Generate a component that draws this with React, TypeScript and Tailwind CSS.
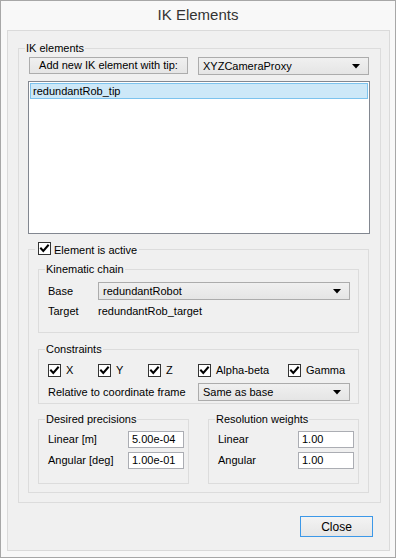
import React from "react";

const font = { fontFamily: '"Liberation Sans", Arial, sans-serif' };

const Check = () => (
  <span className="inline-flex w-[13px] h-[13px] shrink-0 border border-[#333333] bg-white items-center justify-center">
    <svg width="11" height="11" viewBox="0 0 11 11">
      <path d="M2 5.5 L4.3 8 L9 2.5" fill="none" stroke="#000" strokeWidth="2" strokeLinecap="square" />
    </svg>
  </span>
);

const Arrow = () => (
  <svg width="8" height="5" viewBox="0 0 8 5" className="shrink-0">
    <path d="M0 0 H8 L4 4.5 Z" fill="#000" />
  </svg>
);

const Combo = ({ value, className }: { value: string; className: string }) => (
  <div
    className={`flex items-center justify-between h-[18px] border border-[#acacac] bg-gradient-to-b from-[#f0f0f0] to-[#e5e5e5] pl-[4px] pr-[8px] ${className}`}
  >
    <span className="leading-none">{value}</span>
    <Arrow />
  </div>
);

const Field = ({ value }: { value: string }) => (
  <div className="w-[56px] h-[17px] border border-[#abadb3] bg-white pl-[3px] flex items-center leading-none">
    {value}
  </div>
);

const Group = ({
  label,
  className,
  children,
}: {
  label: React.ReactNode;
  className: string;
  children?: React.ReactNode;
}) => (
  <div className={`relative border border-[#dcdcdc] ${className}`}>
    <div className="absolute left-[6px] top-[-8px] bg-[#f0f0f0] px-[1px] leading-[14px] flex items-center">
      {label}
    </div>
    {children}
  </div>
);

const checks = [
  { label: "X", w: "w-[50px]" },
  { label: "Y", w: "w-[50px]" },
  { label: "Z", w: "w-[50px]" },
  { label: "Alpha-beta", w: "w-[90px]" },
  { label: "Gamma", w: "w-[70px]" },
];

export default function App() {
  return (
    <div
      className="w-[396px] h-[558px] border border-[#a7a7a7] bg-[#f8f8f8] text-[11px] text-black"
      style={font}
    >
      <div className="h-[29px] flex items-center justify-center text-[15px] text-[#333333]">
        IK Elements
      </div>

      <div className="ml-[6px] w-[383px] h-[521px] border border-[#dadada] bg-[#f0f0f0]">
        <Group label="IK elements" className="ml-[10px] mt-[17px] w-[363px] h-[455px]">
          <div className="flex ml-[10px] mt-[8px]">
            <div className="w-[159px] h-[17px] border border-[#acacac] bg-gradient-to-b from-[#f0f0f0] to-[#e5e5e5] flex items-center justify-center leading-none">
              Add new IK element with tip:
            </div>
            <Combo value="XYZCameraProxy" className="ml-[10px] w-[171px] h-[17px]" />
          </div>

          <div className="ml-[9px] mt-[6px] w-[342px] h-[153px] border border-[#828790] bg-white p-[1px]">
            <div className="h-[16px] border border-[#7cc3ee] bg-[#cde8f8] flex items-center pl-[2px] leading-none">
              redundantRob_tip
            </div>
          </div>

          <Group
            label={
              <>
                <span className="ml-[2px]">
                  <Check />
                </span>
                <span className="ml-[3px] pr-[1px]">Element is active</span>
              </>
            }
            className="ml-[9px] mt-[15px] w-[341px] h-[244px]"
          >
            <Group label="Kinematic chain" className="ml-[9px] mt-[19px] w-[321px] h-[64px]">
              <div className="flex items-center mt-[12px] pl-[9px]">
                <span className="w-[50px]">Base</span>
                <Combo value="redundantRobot" className="w-[252px]" />
              </div>
              <div className="flex items-center mt-[4px] pl-[9px] h-[14px]">
                <span className="w-[50px]">Target</span>
                <span>redundantRob_target</span>
              </div>
            </Group>

            <Group label="Constraints" className="ml-[9px] mt-[16px] w-[321px] h-[55px]">
              <div className="flex mt-[14px] pl-[9px]">
                {checks.map((c) => (
                  <div key={c.label} className={`flex items-center ${c.w}`}>
                    <Check />
                    <span className="ml-[5px] leading-none">{c.label}</span>
                  </div>
                ))}
              </div>
              <div className="flex items-center mt-[6px] pl-[9px]">
                <span className="w-[150px]">Relative to coordinate frame</span>
                <Combo value="Same as base" className="w-[152px]" />
              </div>
            </Group>

            <div className="flex mt-[15px] ml-[9px]">
              <Group label="Desired precisions" className="w-[151px] h-[65px]">
                <div className="flex items-center mt-[11px] pl-[9px]">
                  <span className="w-[80px]">Linear [m]</span>
                  <Field value="5.00e-04" />
                </div>
                <div className="flex items-center mt-[4px] pl-[9px]">
                  <span className="w-[80px]">Angular [deg]</span>
                  <Field value="1.00e-01" />
                </div>
              </Group>
              <Group label="Resolution weights" className="ml-[19px] w-[151px] h-[65px]">
                <div className="flex items-center mt-[11px] pl-[9px]">
                  <span className="w-[80px]">Linear</span>
                  <Field value="1.00" />
                </div>
                <div className="flex items-center mt-[4px] pl-[9px]">
                  <span className="w-[80px]">Angular</span>
                  <Field value="1.00" />
                </div>
              </Group>
            </div>
          </Group>
        </Group>

        <div className="flex justify-end mt-[13px] mr-[16px]">
          <div className="w-[73px] h-[21px] border border-[#3c98e8] bg-gradient-to-b from-[#f3f3f3] to-[#e6e6e6] flex items-center justify-center text-[12px] leading-none">
            Close
          </div>
        </div>
      </div>
    </div>
  );
}
